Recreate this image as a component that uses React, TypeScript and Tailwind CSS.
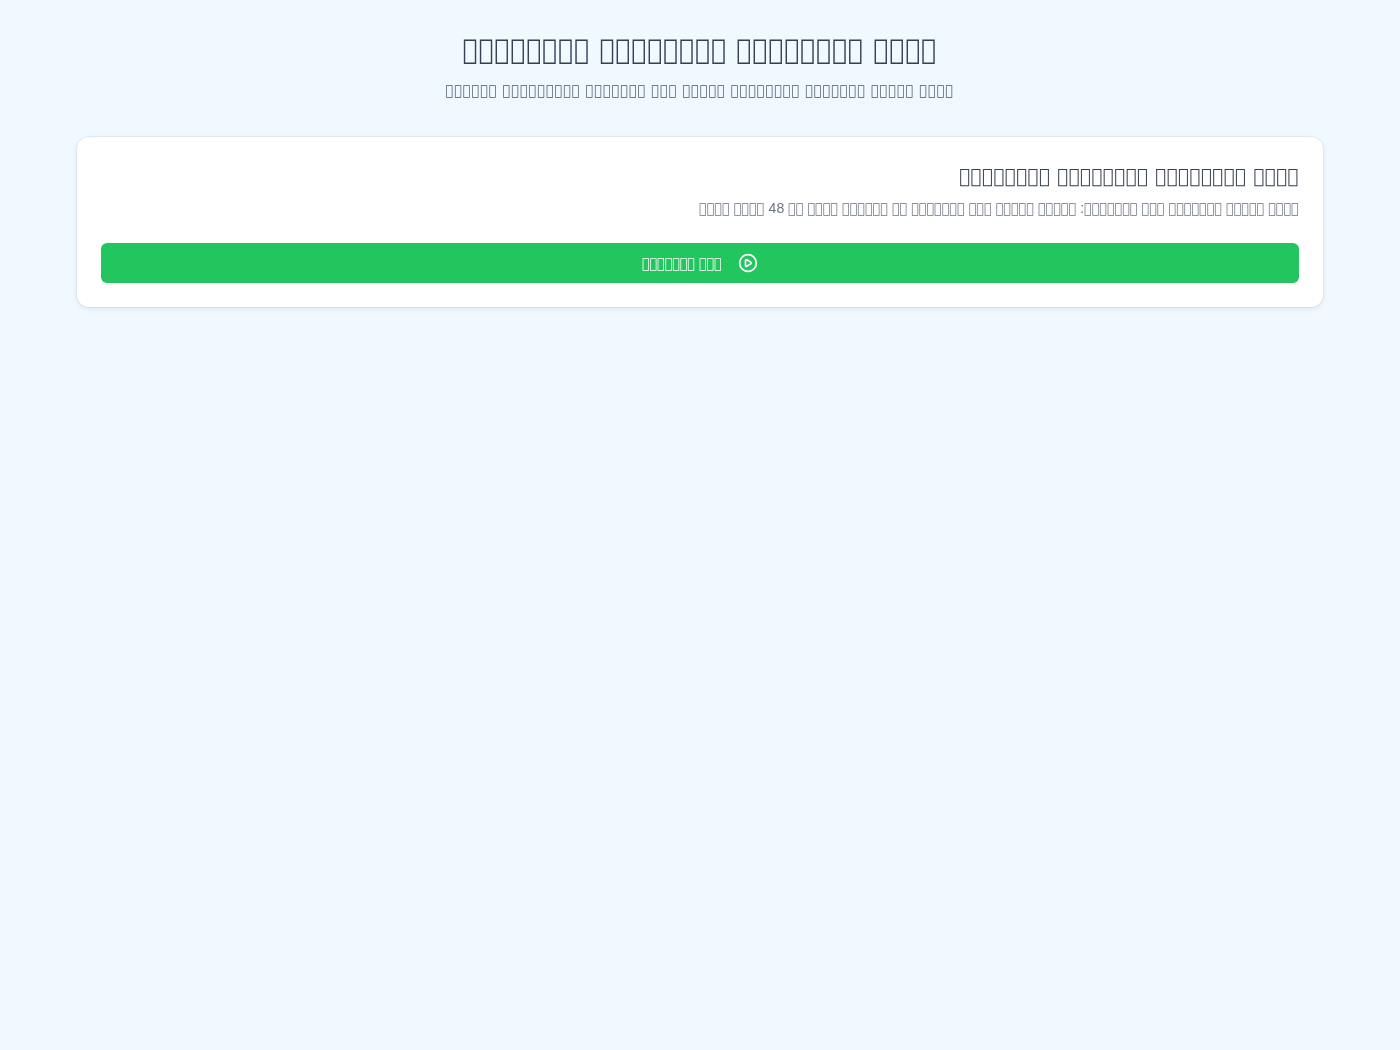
import { CirclePlay } from 'lucide-react';

// source strings render as missing-glyph boxes, so private-use characters stand in
const box = (...lengths: number[]) => lengths.map((n) => '\uE000'.repeat(n)).join(' ');

const pageTitle = box(8, 8, 8, 4);
const pageSubtitle = box(6, 9, 7, 3, 5, 8, 7, 5, 4);
const buttonLabel = box(7, 3);

export default function App() {
  return (
    <div dir="rtl" className="min-h-screen bg-[#f0f9ff] font-['DejaVu_Sans_Condensed',sans-serif]">
      <div className="mx-auto w-[89%] pt-[32px] will-change-transform">
        <header className="mb-[36px] text-center">
          <h1 className="mb-[12px] text-[28px] leading-[36px] font-semibold tracking-[0.8px] text-[#334155]">{pageTitle}</h1>
          <p className="text-[14px] leading-[21px] font-medium tracking-[1.1px] text-[#4b5563]">{pageSubtitle}</p>
        </header>

        <section className="rounded-xl bg-white p-[24px] shadow-[0_2px_6px_rgba(0,0,0,0.08)] ring-1 ring-black/5">
          <h2 className="mb-[8px] text-[20px] leading-[30px] font-semibold tracking-[0.6px] text-[#374151]">{pageTitle}</h2>
          <p className="mb-[25px] text-[14px] leading-[19px] tracking-[0.07px] text-[#6b7280]">
            {box(4, 4)} <span className="font-['Liberation_Sans',sans-serif]">48</span> {box(2, 4, 6, 2, 7, 3, 5, 5)}{' '}
            <span className="font-['Liberation_Sans',sans-serif]">:</span>
            {box(7, 3, 7, 5, 4)}
          </p>
          <button className="flex h-[40px] w-full items-center justify-center gap-[16px] rounded-md bg-[#22c55e] text-[14px] font-medium text-white">
            <CirclePlay className="h-[20px] w-[20px]" />
            <span>{buttonLabel}</span>
          </button>
        </section>
      </div>
    </div>
  );
}
